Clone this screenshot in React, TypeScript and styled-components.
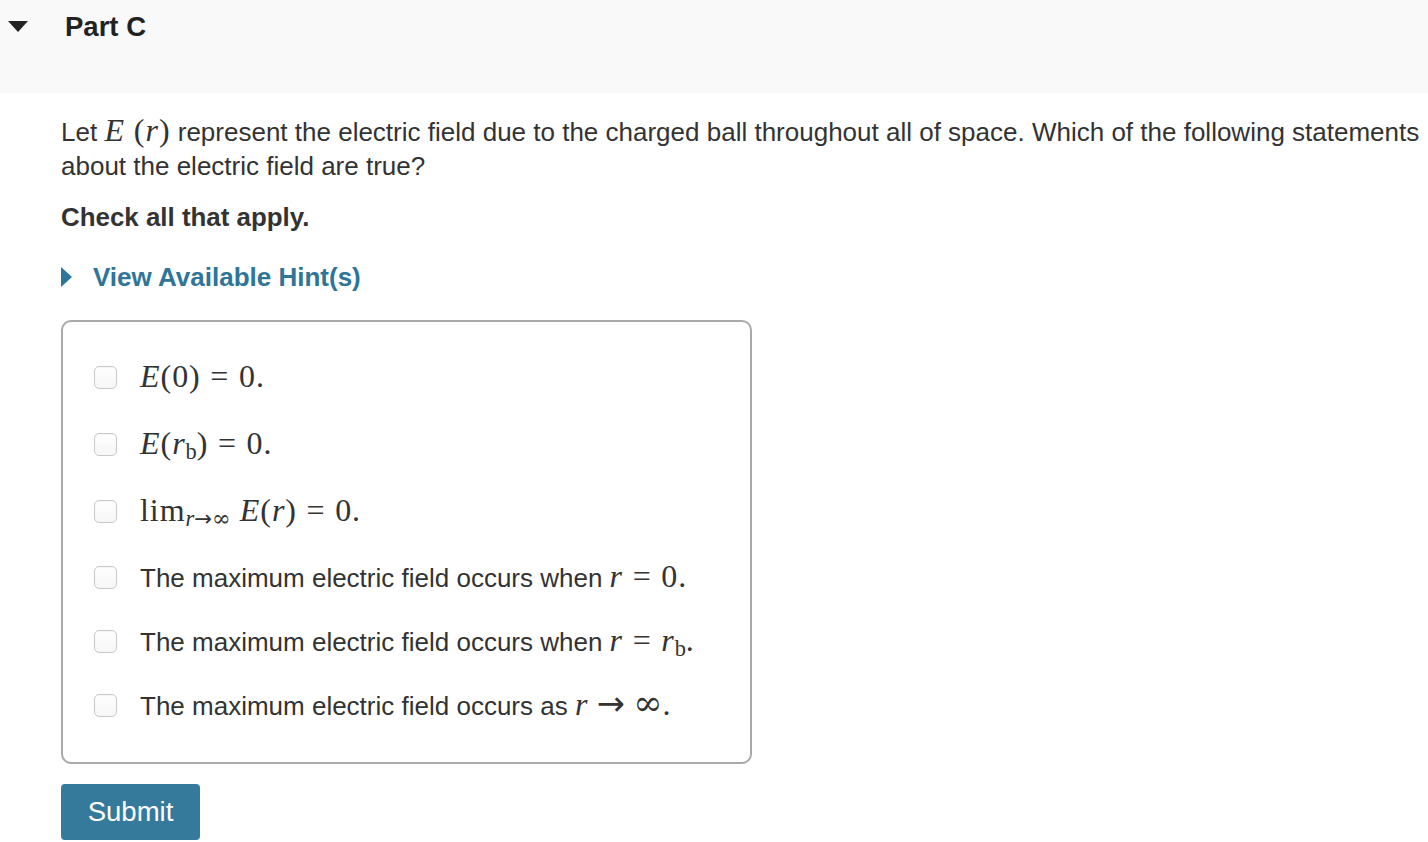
import React from 'react'
import styled, { createGlobalStyle } from 'styled-components'

const GlobalStyle = createGlobalStyle`
  html, body {
    margin: 0;
    padding: 0;
    background: #fff;
    overflow: hidden;
  }
  body {
    font-family: "Liberation Sans", Arial, Helvetica, sans-serif;
    color: #333;
  }
`

const Page = styled.div`
  width: 1428px;
  height: 842px;
  overflow: hidden;
`

const PartHeader = styled.div`
  height: 93px;
  background: #f9f9f9;
  display: flex;
  align-items: flex-start;
  padding-top: 10px;
  box-sizing: border-box;
`

const Caret = styled.span`
  width: 0;
  height: 0;
  margin: 11px 0 0 8px;
  border-left: 10px solid transparent;
  border-right: 10px solid transparent;
  border-top: 11px solid #222;
`

const PartTitle = styled.h2`
  margin: 0 0 0 37px;
  font-size: 27.5px;
  line-height: 34px;
  font-weight: 700;
  color: #222;
`

const Content = styled.div`
  padding: 21px 0 0 61px;
  width: 1372px;
`

const Prompt = styled.p`
  margin: 0;
  font-size: 26px;
  line-height: 34px;
  color: #333;
`

const Instruction = styled.p`
  margin: 17px 0 0;
  font-size: 25.9px;
  line-height: 34px;
  font-weight: 700;
  color: #333;
`

const HintToggle = styled.div`
  margin-top: 26px;
  display: flex;
  align-items: center;
  height: 34px;
  color: #2e7597;
  font-size: 26px;
  font-weight: 700;
`

const HintCaret = styled.span`
  width: 0;
  height: 0;
  border-top: 10px solid transparent;
  border-bottom: 10px solid transparent;
  border-left: 11px solid #2e7597;
  margin-right: 21px;
`

const AnswerBox = styled.div`
  margin-top: 26px;
  width: 691px;
  box-sizing: border-box;
  border: 2px solid #a9a9a9;
  border-radius: 10px;
  padding: 22px 0 25px 31px;
`

const Option = styled.label<{ $tall?: boolean }>`
  display: flex;
  align-items: center;
  height: ${p => (p.$tall ? 67 : 64)}px;
  font-size: 26px;
  color: #333;
`

const OptionText = styled.span`
  line-height: 34px;
  white-space: nowrap;
`

const Check = styled.span`
  width: 23px;
  height: 23px;
  box-sizing: border-box;
  border: 1px solid #c9c9c9;
  border-radius: 5px;
  background: linear-gradient(#fff, #f6f6f6);
  box-shadow: inset 0 1px 1px rgba(0, 0, 0, 0.04);
  margin-right: 23px;
  flex-shrink: 0;
`

const Math = styled.span`
  font-family: "Liberation Serif", "Times New Roman", serif;
  font-size: 32px;
  line-height: 1;
  letter-spacing: 0.03em;
  color: #333;
  white-space: nowrap;
`

const Var = styled.i`
  font-style: italic;
`

const Sub = styled.sub<{ $italic?: boolean }>`
  font-size: 0.7em;
  vertical-align: -0.22em;
  line-height: 0;
  letter-spacing: 0;
  font-style: ${p => (p.$italic ? 'italic' : 'normal')};
`

const Op = styled.span`
  margin: 0 0.3em;
`

const Arrow = styled.span<{ $small?: boolean }>`
  font-family: "DejaVu Sans", sans-serif;
  font-style: normal;
  line-height: 0;
  font-size: ${p => (p.$small ? '0.95em' : '1.05em')};
  margin: ${p => (p.$small ? '0' : '0 0.25em')};
  letter-spacing: 0;
`

const Infinity = styled.span<{ $small?: boolean }>`
  font-family: "DejaVu Serif", serif;
  font-style: normal;
  line-height: 0;
  font-size: ${p => (p.$small ? '1em' : '1.1em')};
  letter-spacing: 0;
`

const SubmitButton = styled.button`
  margin-top: 20px;
  width: 139px;
  height: 56px;
  border: none;
  border-radius: 4px;
  background: #357a9a;
  color: #fff;
  font-family: "Liberation Sans", Arial, Helvetica, sans-serif;
  font-size: 27.5px;
  padding: 0;
  cursor: pointer;
`

export default function App() {
  return (
    <Page>
      <GlobalStyle />
      <PartHeader>
        <Caret />
        <PartTitle>Part C</PartTitle>
      </PartHeader>

      <Content>
        <Prompt>
          Let <Math><Var>E</Var> (<Var>r</Var>)</Math> represent the electric field due to the charged ball
          throughout all of space. Which of the following statements about the electric field are true?
        </Prompt>

        <Instruction>Check all that apply.</Instruction>

        <HintToggle>
          <HintCaret />
          View Available Hint(s)
        </HintToggle>

        <AnswerBox>
          <Option $tall>
            <Check />
            <OptionText>
              <Math><Var>E</Var>(0)<Op>=</Op>0.</Math>
            </OptionText>
          </Option>
          <Option $tall>
            <Check />
            <OptionText>
              <Math><Var>E</Var>(<Var>r</Var><Sub>b</Sub>)<Op>=</Op>0.</Math>
            </OptionText>
          </Option>
          <Option $tall>
            <Check />
            <OptionText>
              <Math>
                lim<Sub $italic>r<Arrow $small>→</Arrow><Infinity $small>∞</Infinity></Sub> <Var>E</Var>(<Var>r</Var>)<Op>=</Op>0.
              </Math>
            </OptionText>
          </Option>
          <Option>
            <Check />
            <OptionText>
              The maximum electric field occurs when <Math><Var>r</Var><Op>=</Op>0.</Math>
            </OptionText>
          </Option>
          <Option>
            <Check />
            <OptionText>
              The maximum electric field occurs when <Math><Var>r</Var><Op>=</Op><Var>r</Var><Sub>b</Sub>.</Math>
            </OptionText>
          </Option>
          <Option>
            <Check />
            <OptionText>
              The maximum electric field occurs as <Math><Var>r</Var><Arrow>→</Arrow><Infinity>∞</Infinity>.</Math>
            </OptionText>
          </Option>
        </AnswerBox>

        <SubmitButton>Submit</SubmitButton>
      </Content>
    </Page>
  )
}
